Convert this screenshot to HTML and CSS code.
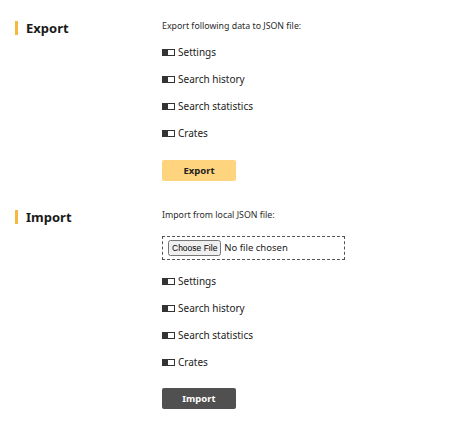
FILE: index.html
```html
<!DOCTYPE html>
<html>
<head>
<meta charset="utf-8">
<link rel="stylesheet" href="styles.css">
</head>
<body>
<div class="page">
  <section class="section export">
    <h2 class="section-title">Export</h2>
    <div class="content">
      <p class="desc">Export following data to JSON file:</p>
      <ul class="options">
        <li><span class="toggle"></span>Settings</li>
        <li><span class="toggle"></span>Search history</li>
        <li><span class="toggle"></span>Search statistics</li>
        <li><span class="toggle"></span>Crates</li>
      </ul>
      <button class="btn btn-export">Export</button>
    </div>
  </section>
  <section class="section import">
    <h2 class="section-title">Import</h2>
    <div class="content">
      <p class="desc">Import from local JSON file:</p>
      <div class="file-box"><input type="file" class="file-input"></div>
      <ul class="options options-import">
        <li><span class="toggle"></span>Settings</li>
        <li><span class="toggle"></span>Search history</li>
        <li><span class="toggle"></span>Search statistics</li>
        <li><span class="toggle"></span>Crates</li>
      </ul>
      <button class="btn btn-import">Import</button>
    </div>
  </section>
</div>
</body>
</html>
```
FILE: styles.css
```css
html, body {
  margin: 0;
  padding: 0;
  background: #ffffff;
}
body {
  font-family: "Noto Sans", "Open Sans", sans-serif;
  color: #222222;
}
.page {
  padding-top: 19px;
  padding-left: 15px;
}
.section {
  display: grid;
  grid-template-columns: 147px 1fr;
}
.import {
  margin-top: 27px;
}
.section-title {
  margin: 2px 0 0 0;
  align-self: start;
  border-left: 3px solid #f6b83f;
  padding-left: 8px;
  font-size: 13px;
  line-height: 14px;
  font-weight: 700;
  color: #1a1a1a;
}
.content {
  display: flex;
  flex-direction: column;
  align-items: flex-start;
}
.desc {
  margin: 0;
  font-size: 8.8px;
  line-height: 14px;
  color: #2a2a2a;
}
.options {
  list-style: none;
  margin: 12px 0 0 0;
  padding: 0;
  display: flex;
  flex-direction: column;
  gap: 13px;
}
.options-import {
  margin-top: 14px;
}
.options li {
  display: flex;
  align-items: center;
  height: 14px;
  font-size: 10px;
  line-height: 14px;
  color: #222;
}
.toggle {
  width: 13px;
  height: 7px;
  box-sizing: border-box;
  border: 1px solid #333;
  background: linear-gradient(to right, #333 0, #333 50%, #fff 50%, #fff 100%);
  margin-right: 3px;
}
.btn {
  margin-top: 20px;
  width: 74px;
  height: 21px;
  border: none;
  border-radius: 2px;
  font-family: "Noto Sans", "Open Sans", sans-serif;
  font-weight: 700;
  font-size: 9.5px;
  padding: 0;
}
.btn-export {
  background: #ffd47f;
  color: #222;
}
.btn-import {
  margin-top: 19px;
  background: #505050;
  color: #ffffff;
}
.file-box {
  margin-top: 14px;
  width: 183px;
  height: 24px;
  box-sizing: border-box;
  border: 1px dashed #555;
  display: flex;
  align-items: center;
  padding-left: 5px;
}
.file-input {
  font-family: "Noto Sans", "Open Sans", sans-serif;
  font-size: 9.5px;
  color: #222;
}
.file-input::file-selector-button {
  font-family: "Liberation Sans", Arial, sans-serif;
  font-size: 8.5px;
  padding: 1px 2px;
  margin-right: 3px;
}
```
